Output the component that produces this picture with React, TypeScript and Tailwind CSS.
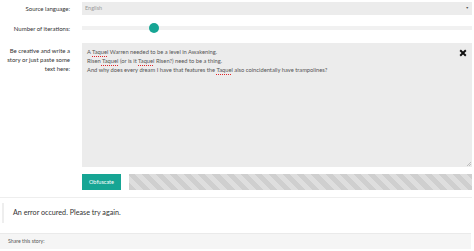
import React from 'react';

const Taquel = () => (
  <span className="underline decoration-dotted decoration-[#e0262b] decoration-[1px] underline-offset-[1.5px]">Taquel</span>
);

export default function App() {
  return (
    <div className="w-[474px] h-[251px] bg-white overflow-hidden text-[#333]" style={{ fontFamily: 'Lato, "Open Sans", sans-serif' }}>
      <div className="flex flex-col gap-[4px] pt-[2px] pr-[2px]">
        <div className="flex items-center">
          <div className="w-[70px] text-right text-[6px]">Source language:</div>
          <div className="ml-[12px] flex-1 h-[13px] bg-[#ececec] flex items-center justify-between px-[3px] text-[5.5px] text-[#999]">
            <span>English</span>
            <span className="text-[3.5px] text-[#555]">▼</span>
          </div>
        </div>
        <div className="flex items-center h-[18px]">
          <div className="w-[70px] text-right text-[6px]">Number of iterations:</div>
          <div className="ml-[12px] flex-1 relative h-[4px] bg-[#f1f1f1]">
            <div className="absolute left-[67px] top-[-3px] w-[10px] h-[10px] rounded-full bg-[#16a594]" />
          </div>
        </div>
        <div className="flex items-start mt-[2px]">
          <div className="w-[70px] text-right text-[6px] leading-[9px] pt-[3px]">
            Be creative and write a story or just paste some text here:
          </div>
          <div className="ml-[12px] flex-1 h-[124px] bg-[#ececec] relative px-[5px] pt-[4px] text-[5.75px] leading-[9px] text-[#555]">
            <div>A <Taquel /> Warren needed to be a level in Awakening.</div>
            <div>Risen <Taquel /> (or is it <Taquel /> Risen?) need to be a thing.</div>
            <div>And why does every dream I have that features the <Taquel /> also coincidentally have trampolines?</div>
            <svg className="absolute right-[5px] top-[6px]" width="8" height="8" viewBox="0 0 10 10">
              <path d="M1.5 1.5 L8.5 8.5 M8.5 1.5 L1.5 8.5" stroke="#111" strokeWidth="2.4" />
            </svg>
            <svg className="absolute right-[1px] bottom-[1px]" width="5" height="5" viewBox="0 0 5 5">
              <path d="M5 1 L1 5 M5 3 L3 5" stroke="#aaa" strokeWidth="0.7" />
            </svg>
          </div>
        </div>
        <div className="flex items-center mt-[3px] h-[16px]">
          <div className="w-[82px]" />
          <div className="w-[39px] h-[16px] bg-[#16a594] text-white text-[5.5px] flex items-center justify-center">Obfuscate</div>
          <div className="ml-[8px] flex-1 h-[16px] bg-[repeating-linear-gradient(45deg,#cfcfcf_0px,#cfcfcf_5px,#dedede_5px,#dedede_10px)]" />
        </div>
      </div>
      <div className="mt-[7px] h-px bg-[#eeeeee] mr-[2px]" />
      <div className="mt-[5px] ml-[2px] mr-[2px] h-[20px] border-l-[2px] border-[#eeeeee] flex items-center pl-[9px] text-[7.2px] text-[#333]">
        An error occured. Please try again.
      </div>
      <div className="mt-[10px] mr-[3px] h-[16px] bg-[#f5f5f5] border-t border-[#eaeaea] flex items-center pl-[8px] text-[5.2px] text-[#555]">
        Share this story:
      </div>
    </div>
  );
}
